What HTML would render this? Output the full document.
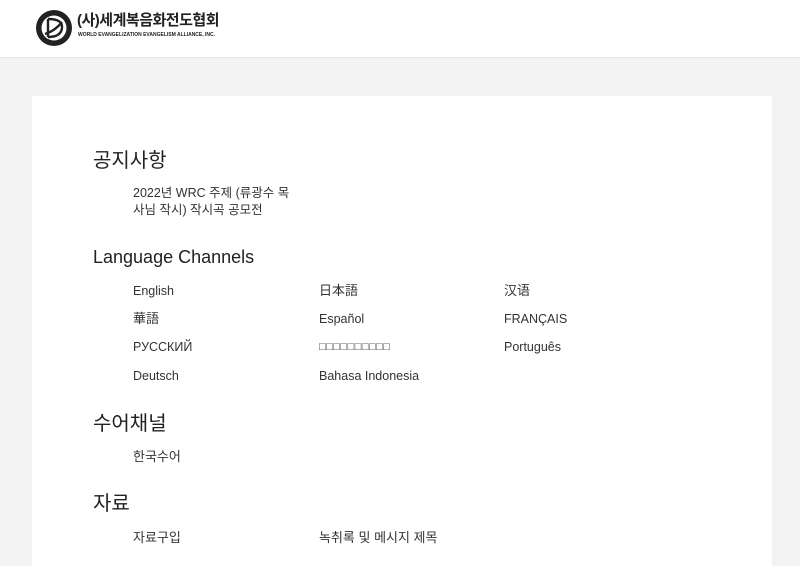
<!DOCTYPE html>
<html><head><meta charset="utf-8"><style>
html,body{margin:0;padding:0;width:800px;height:561px;overflow:hidden;background:#f3f3f3;font-family:"Liberation Sans","Noto Sans CJK KR",sans-serif;color:#333}
.hdr{position:absolute;left:0;top:0;width:800px;height:57px;background:#fff;border-bottom:1px solid #e6e6e6}
.card{position:absolute;left:32px;top:96px;width:740px;height:470px;background:#fff}
.a{position:absolute;white-space:nowrap}
h2{position:absolute;margin:0;font-weight:normal;font-size:20px;line-height:22px;color:#222;white-space:nowrap}
.i{position:absolute;font-size:12.5px;line-height:16px;height:16px;color:#333;white-space:nowrap}
.k{font-size:13px}
</style></head><body>
<div class="hdr">
<svg class="a" style="left:35px;top:9px" width="38" height="38" viewBox="0 0 38 38">
<circle cx="19" cy="19" r="18" fill="#222"/><circle cx="19" cy="19" r="12.5" fill="#fff"/>
<path d="M13 10 V28 M13 10 Q28 10 27 19 Q26 28 13 28 M10 25 Q20 22 27 13" stroke="#222" stroke-width="2.4" fill="none"/>
</svg>
<div class="a" style="left:77px;top:12px;font-size:15px;line-height:18px;font-weight:bold;color:#222;letter-spacing:-0.5px">(사)세계복음화전도협회</div>
<div class="a" style="left:78px;top:32px;font-size:5px;line-height:6px;font-weight:bold;color:#222">WORLD EVANGELIZATION EVANGELISM ALLIANCE, INC.</div>
</div>
<div class="card"></div>
<h2 style="left:93px;top:150px">공지사항</h2>
<div class="i" style="left:133px;top:185px">2022년 WRC 주제 (류광수 목</div>
<div class="i" style="left:133px;top:202px">사님 작시) 작시곡 공모전</div>
<h2 style="left:93px;top:246px;font-size:18px">Language Channels</h2>
<div class="i" style="left:133px;top:283px">English</div>
<div class="i k" style="left:319px;top:283px">日本語</div>
<div class="i k" style="left:504px;top:283px">汉语</div>
<div class="i k" style="left:133px;top:311px">華語</div>
<div class="i" style="left:319px;top:311px">Español</div>
<div class="i" style="left:504px;top:311px">FRANÇAIS</div>
<div class="i" style="left:133px;top:339px">РУССКИЙ</div>
<div class="i" style="left:319px;top:339px;font-size:11px;letter-spacing:0.5px">□□□□□□□□□□</div>
<div class="i" style="left:504px;top:339px">Português</div>
<div class="i" style="left:133px;top:368px">Deutsch</div>
<div class="i" style="left:319px;top:368px">Bahasa Indonesia</div>
<h2 style="left:93px;top:413px">수어채널</h2>
<div class="i k" style="left:133px;top:449px">한국수어</div>
<h2 style="left:93px;top:493px">자료</h2>
<div class="i k" style="left:133px;top:530px">자료구입</div>
<div class="i k" style="left:319px;top:530px">녹취록 및 메시지 제목</div>
</body></html>
